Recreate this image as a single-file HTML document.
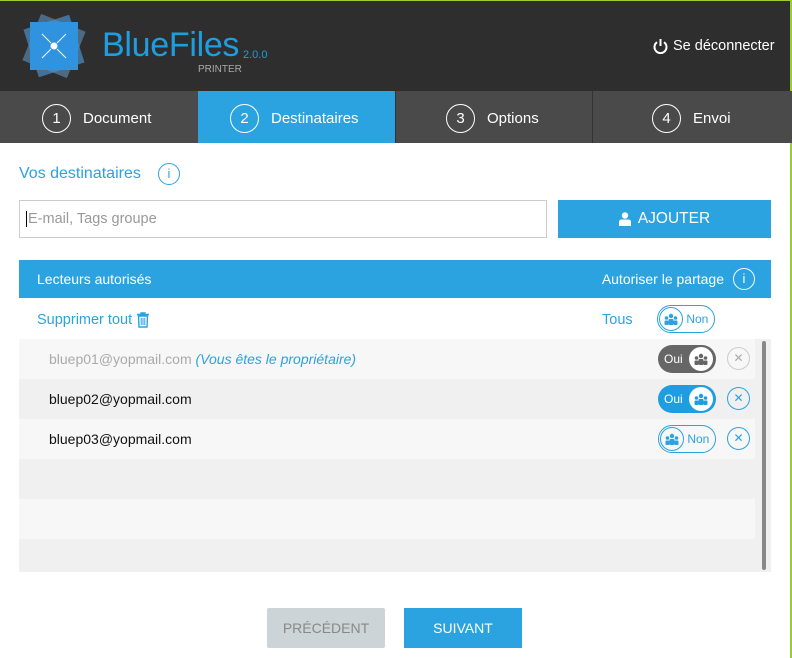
<!DOCTYPE html>
<html><head><meta charset="utf-8"><style>
*{box-sizing:border-box;margin:0;padding:0}
body{width:792px;height:658px;overflow:hidden;background:#fff;font-family:"Liberation Sans","DejaVu Sans",sans-serif;position:relative}
.a{position:absolute}
.hdr{left:0;top:0;width:792px;height:91px;background:#2e2e2e;border-top:1px solid #9acd32}
.tabs{left:0;top:91px;width:792px;height:52px;background:#4a4a4a}
.tab{position:absolute;top:0;height:52px;color:#fff;font-size:15px;display:flex;align-items:center}
.num{width:29px;height:29px;border:1.5px solid #fff;border-radius:50%;display:flex;align-items:center;justify-content:center;font-size:15px;margin-right:12px}
.blue{color:#2aa3e0}
.row{position:absolute;left:19px;width:736px;height:40px;font-size:14px;color:#111;padding-left:30px;line-height:40px}
.tog{position:absolute;width:58px;height:28px;border-radius:14px;font-size:12px;display:flex;align-items:center}
.ic{width:24px;height:24px;border-radius:50%;display:flex;align-items:center;justify-content:center}
.x{position:absolute;width:23px;height:23px;border-radius:50%;border:1px solid #2aa3e0;color:#2aa3e0;font-size:12px;text-align:center;line-height:21px}
</style></head><body>
<svg width="0" height="0" style="position:absolute"><defs><g id="grp"><circle cx="8" cy="4" r="2.2"/><circle cx="3.5" cy="6" r="1.8"/><circle cx="12.5" cy="6" r="1.8"/><rect x="5.5" y="7" width="5" height="6" rx="1"/><rect x="1.5" y="8.5" width="4" height="4.5" rx="1"/><rect x="10.5" y="8.5" width="4" height="4.5" rx="1"/></g></defs></svg>
<div class="a hdr"></div>
<div class="a" style="right:0;top:0;width:2px;height:658px;background:#9acd32"></div>
<svg class="a" style="left:18px;top:12px" width="72" height="68" viewBox="0 0 72 68">
<rect x="12" y="9" width="48" height="50" fill="#5a86a8" opacity=".7" transform="rotate(22 36 34)"/>
<rect x="12" y="9" width="48" height="50" fill="#4f8fc6" opacity=".7" transform="rotate(-18 36 34)"/>
<rect x="12" y="10" width="48" height="48" fill="#2f93e0"/>
<path d="M24 22L33 31M48 22L39 31M24 46L33 37M48 46L39 37" stroke="#fff" stroke-width="1"/>
<circle cx="36" cy="34" r="3.5" fill="#fff"/></svg>
<div class="a" style="left:102px;top:26px;font-size:34px;color:#1e9de0;letter-spacing:-.3px">BlueFiles</div>
<div class="a" style="left:243px;top:49px;font-size:11px;color:#1e9de0">2.0.0</div>
<div class="a" style="left:198px;top:64px;font-size:10px;color:#aaa">PRINTER</div>
<div class="a" style="left:653px;top:38px;font-size:14.5px;color:#fff;display:flex;align-items:center"><svg width="15" height="16" viewBox="0 0 15 16" style="margin-right:5px"><path d="M4 4.2A6 6 0 1 0 11 4.2" fill="none" stroke="#fff" stroke-width="2"/><path d="M7.5 1V8" stroke="#fff" stroke-width="2"/></svg>Se déconnecter</div>
<div class="a tabs"></div>
<div class="a" style="left:198px;top:91px;width:197px;height:52px;background:#2aa3e0"></div>
<div class="a" style="left:395px;top:91px;width:1px;height:52px;background:#333"></div>
<div class="a" style="left:592px;top:91px;width:1px;height:52px;background:#333"></div>
<div class="tab" style="left:42px;top:92px"><div class="num">1</div>Document</div>
<div class="tab" style="left:230px;top:92px"><div class="num">2</div>Destinataires</div>
<div class="tab" style="left:446px;top:92px"><div class="num">3</div>Options</div>
<div class="tab" style="left:652px;top:92px"><div class="num">4</div>Envoi</div>
<div class="a blue" style="left:19px;top:165px;font-size:16px">Vos destinataires</div>
<div class="a" style="left:158px;top:163px;width:22px;height:22px;border:1.5px solid #2aa3e0;border-radius:50%;color:#2aa3e0;font-size:13px;text-align:center;line-height:19px">i</div>
<div class="a" style="left:19px;top:200px;width:528px;height:38px;border:1px solid #ccc;font-size:14.5px;color:#999;padding-left:6px;line-height:36px"><span style="border-left:1px solid #000;padding-left:1px">E-mail, Tags groupe</span></div>
<div class="a" style="left:558px;top:200px;width:213px;height:38px;background:#2aa3e0;color:#fff;font-size:15.5px;display:flex;align-items:center;justify-content:center"><svg width="12" height="14" viewBox="0 0 12 14" style="margin-right:7px"><circle cx="6" cy="3.5" r="3.2" fill="#fff"/><path d="M0 14V10Q0 7.5 3 7.5H9Q12 7.5 12 10V14Z" fill="#fff"/></svg>AJOUTER</div>
<div class="a" style="left:19px;top:260px;width:752px;height:38px;background:#2aa3e0;color:#fff;font-size:14px;line-height:38px;padding-left:18px">Lecteurs autorisés<span style="position:absolute;right:47px">Autoriser le partage</span></div>
<div class="a" style="left:733px;top:268px;width:22px;height:22px;border:1.5px solid #fff;border-radius:50%;color:#fff;font-size:13px;text-align:center;line-height:19px">i</div>
<div class="a blue" style="left:37px;top:312px;font-size:14.5px;display:flex;align-items:center">Supprimer tout<svg width="12" height="16" viewBox="0 0 12 16" style="margin-left:5px"><path d="M0 2.5H12M4 2.5V1H8V2.5M1.5 4H10.5L10 15H2Z" fill="none" stroke="#2aa3e0" stroke-width="1.4"/><path d="M4.2 6V13M6 6V13M7.8 6V13" stroke="#2aa3e0"/></svg></div>
<div class="a blue" style="left:602px;top:312px;font-size:14.5px">Tous</div>
<div class="tog" style="left:657px;top:305px;border:1px solid #2aa3e0;color:#2aa3e0;padding-left:1px"><div class="ic" style="border:1.5px solid #2aa3e0"><svg width="16" height="14" fill="#2aa3e0"><use href="#grp"/></svg></div>&nbsp;Non</div>
<div class="a" style="left:19px;top:339px;width:752px;height:233px;background:#f0f0f0"></div>
<div class="row" style="top:339px;background:#f7f7f7;color:#aaa">bluep01@yopmail.com <i class="blue">(Vous êtes le propriétaire)</i></div>
<div class="row" style="top:379px;background:#f0f0f0">bluep02@yopmail.com</div>
<div class="row" style="top:419px;background:#f7f7f7">bluep03@yopmail.com</div>
<div class="row" style="top:459px;background:#f0f0f0"></div>
<div class="row" style="top:499px;background:#f7f7f7"></div>
<div class="row" style="top:539px;height:33px;background:#f0f0f0"></div>
<div class="a" style="left:762px;top:341px;width:4px;height:229px;background:#888;border-radius:2px"></div>
<div class="tog" style="left:658px;top:345px;background:#666;color:#fff;padding-left:6px">Oui&nbsp;&nbsp;<div class="ic" style="background:#fff"><svg width="16" height="14" fill="#666"><use href="#grp"/></svg></div></div>
<div class="x" style="left:727px;top:347px;border-color:#ccc;color:#aaa">✕</div>
<div class="tog" style="left:658px;top:385px;background:#1e9de0;color:#fff;padding-left:6px">Oui&nbsp;&nbsp;<div class="ic" style="background:#fff"><svg width="16" height="14" fill="#1e9de0"><use href="#grp"/></svg></div></div>
<div class="x" style="left:727px;top:387px">✕</div>
<div class="tog" style="left:658px;top:425px;border:1px solid #2aa3e0;color:#2aa3e0;padding-left:1px"><div class="ic" style="border:1.5px solid #2aa3e0"><svg width="16" height="14" fill="#2aa3e0"><use href="#grp"/></svg></div>&nbsp;Non</div>
<div class="x" style="left:727px;top:427px">✕</div>
<div class="a" style="left:267px;top:608px;width:118px;height:40px;background:#ccd4d8;color:#888;font-size:14px;text-align:center;line-height:40px;border-radius:2px">PRÉCÉDENT</div>
<div class="a" style="left:404px;top:608px;width:118px;height:40px;background:#2aa3e0;color:#fff;font-size:14px;text-align:center;line-height:40px">SUIVANT</div>
</body></html>
